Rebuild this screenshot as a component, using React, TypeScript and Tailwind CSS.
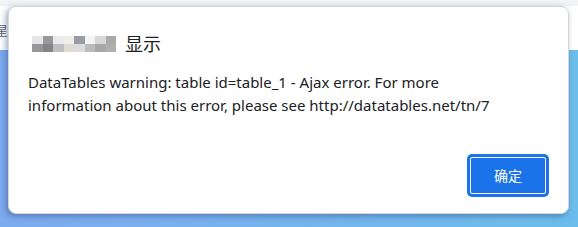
import React from 'react';

// pixelated (blurred) site name in the title
const blurBlocks = [
  ['#e4e4e6', '#8e8e92', '#e9e9ec', '#f0ede6', '#8d939a', '#f3f3f3', '#d2d4d6', '#a3a19c'],
  ['#8c8c90', '#78787c', '#b9b9bc', '#dcd8cf', '#d9d9db', '#b3b5b8', '#9c9ea1', '#a9a7a2'],
];

const App = () => {
  return (
    <div
      className="relative w-[578px] h-[227px] overflow-hidden"
      style={{ fontFamily: '"Noto Sans", "Open Sans", "Noto Sans CJK SC", sans-serif' }}
    >
      {/* page behind the dialog */}
      <div className="flex flex-col h-full">
        <div className="h-[6px] bg-[#f1f3f4]" />
        <div className="h-[44px] bg-white flex items-center">
          <span className="text-[13px] text-[#5f6368] -ml-[5px] mt-[6px]">星</span>
        </div>
        <div className="flex-1 bg-gradient-to-r from-[#7eabf0] to-[#6bbdeb]" />
      </div>

      {/* alert dialog */}
      <div className="absolute left-[8px] top-[6px] w-[561px] h-[208px] bg-white rounded-[8px] border border-[#d6d6d6] shadow-[-2px_2px_6px_rgba(40,60,110,0.45)] flex flex-col px-[19px] pt-[26px] pb-[16px]">
        <div className="flex items-center gap-[9px] h-[22px]">
          <div className="flex flex-col ml-[4px] opacity-90">
            {blurBlocks.map((row, i) => (
              <div key={i} className="flex">
                {row.map((c, j) => (
                  <div key={j} className="w-[10.5px] h-[8px]" style={{ background: c }} />
                ))}
              </div>
            ))}
          </div>
          <span className="text-[18px] text-[#202124] leading-none">显示</span>
        </div>
        <p className="mt-[16px] text-[15px] leading-[23px] text-[#202124]">
          DataTables warning: table id=table_1 - Ajax error. For more
          <br />
          information about this error, please see http://datatables.net/tn/7
        </p>
        <div className="mt-auto flex justify-end">
          <button className="w-[82px] h-[43px] rounded-[5px] bg-[#1a73e8] border-2 border-[#1a73e8] outline outline-1 outline-offset-[-4px] outline-white text-white text-[14px]">
            确定
          </button>
        </div>
      </div>
    </div>
  );
};

export default App;
